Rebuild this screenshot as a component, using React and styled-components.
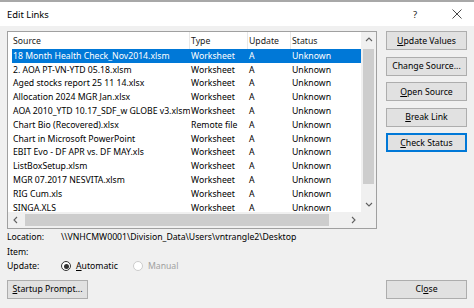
import React from 'react';
import styled, { createGlobalStyle } from 'styled-components';

const GlobalStyle = createGlobalStyle`
  html, body {
    margin: 0;
    padding: 0;
    background: #f0f0f0;
  }
  body {
    font-family: "Noto Sans", "Open Sans", sans-serif;
    font-size: 8.7px;
    color: #000;
  }
`;

const links = [
  ['18 Month Health Check_Nov2014.xlsm', 'Worksheet'],
  ['2. AOA PT-VN-YTD 05.18.xlsm', 'Worksheet'],
  ['Aged stocks report 25 11 14.xlsx', 'Worksheet'],
  ['Allocation 2024 MGR Jan.xlsx', 'Worksheet'],
  ['AOA 2010_YTD 10.17_SDF_w GLOBE v3.xlsm', 'Worksheet'],
  ['Chart Bio (Recovered).xlsx', 'Remote file'],
  ['Chart in Microsoft PowerPoint', 'Worksheet'],
  ['EBIT Evo - DF APR vs. DF MAY.xls', 'Worksheet'],
  ['ListBoxSetup.xlsm', 'Worksheet'],
  ['MGR 07.2017 NESVITA.xlsm', 'Worksheet'],
  ['RIG Cum.xls', 'Worksheet'],
  ['SINGA.XLS', 'Worksheet'],
];

const Chevron = ({ dir }) => {
  const paths = {
    up: 'M1 5 L4 2 L7 5',
    down: 'M1 2 L4 5 L7 2',
    left: 'M5 1 L2 4 L5 7',
    right: 'M2 1 L5 4 L2 7',
  };
  return (
    <svg width="8" height="8" viewBox="0 0 8 8">
      <path d={paths[dir]} fill="none" stroke="#606060" strokeWidth="1.1" />
    </svg>
  );
};

const CloseGlyph = () => (
  <svg width="10" height="10" viewBox="0 0 10 10">
    <path d="M0.5 0.5 L9.5 9.5 M9.5 0.5 L0.5 9.5" stroke="#333" strokeWidth="0.9" />
  </svg>
);

const App = () => {
  return (
    <>
      <GlobalStyle />
      <Window>
        <TitleBar>
          <Title>Edit Links</Title>
          <TitleButtons>
            <TitleGlyph>?</TitleGlyph>
            <CloseGlyph />
          </TitleButtons>
        </TitleBar>

        <Body>
          <TopArea>
            <ListBox>
              <ListContent>
                <HeaderRow>
                  <HeaderCell>Source</HeaderCell>
                  <HeaderCell>Type</HeaderCell>
                  <HeaderCell>Update</HeaderCell>
                  <HeaderCell $last>Status</HeaderCell>
                </HeaderRow>
                {links.map(([source, type], i) => (
                  <Row key={source} $selected={i === 0}>
                    <Cell>{source}</Cell>
                    <Cell>{type}</Cell>
                    <Cell>A</Cell>
                    <Cell>Unknown</Cell>
                  </Row>
                ))}
              </ListContent>

              <VScroll>
                <ArrowBox><Chevron dir="up" /></ArrowBox>
                <VTrack>
                  <VThumb />
                </VTrack>
                <ArrowBox><Chevron dir="down" /></ArrowBox>
              </VScroll>

              <HScroll>
                <ArrowBox $h><Chevron dir="left" /></ArrowBox>
                <HTrack>
                  <HThumb />
                </HTrack>
                <ArrowBox $h><Chevron dir="right" /></ArrowBox>
              </HScroll>
              <Corner />
            </ListBox>

            <ButtonColumn>
              <Button><u>U</u>pdate Values</Button>
              <Button>Chan<u>g</u>e Source...</Button>
              <Button><u>O</u>pen Source</Button>
              <Button><u>B</u>reak Link</Button>
              <Button $focused><u>C</u>heck Status</Button>
            </ButtonColumn>
          </TopArea>

          <InfoBlock>
            <InfoRow>
              <Label>Location:</Label>
              <Value>\\VNHCMW0001\Division_Data\Users\vntrangle2\Desktop</Value>
            </InfoRow>
            <InfoRow>
              <Label>Item:</Label>
            </InfoRow>
            <InfoRow>
              <Label>Update:</Label>
              <RadioGroup>
                <Radio>
                  <RadioCircle $checked />
                  <span><u>A</u>utomatic</span>
                </Radio>
                <Radio $disabled>
                  <RadioCircle $disabled />
                  <span>Manual</span>
                </Radio>
              </RadioGroup>
            </InfoRow>
          </InfoBlock>

          <Footer>
            <Button><u>S</u>tartup Prompt...</Button>
            <Button>Cl<u>o</u>se</Button>
          </Footer>
        </Body>
      </Window>
    </>
  );
};

export default App;


const Window = styled.div`
width: 474px;
height: 308px;
border-top: 2px solid #a8a8a8;
box-sizing: border-box;
background: #f0f0f0;
display: flex;
flex-direction: column;
overflow: hidden;
`;

const TitleBar = styled.div`
height: 24px;
background: #fff;
display: flex;
align-items: center;
justify-content: space-between;
padding: 0 7px;
`;

const Title = styled.div`
font-size: 9.4px;
`;

const TitleButtons = styled.div`
display: flex;
align-items: center;
gap: 35px;
padding-right: 5px;
`;

const TitleGlyph = styled.span`
font-size: 9.5px;
color: #222;
`;

const Body = styled.div`
padding: 5px 7px 0 7px;
display: flex;
flex-direction: column;
`;

const TopArea = styled.div`
display: flex;
gap: 9px;
align-items: flex-start;
`;

const ListBox = styled.div`
width: 370px;
height: 198px;
box-sizing: border-box;
border: 1px solid #a0a0a0;
background: #fff;
display: grid;
grid-template-columns: 1fr 15px;
grid-template-rows: 1fr 16px;
`;

const ListContent = styled.div`
overflow: hidden;
padding-left: 4px;
`;

const columns = '178px 58px 43px 1fr';

const HeaderRow = styled.div`
display: grid;
grid-template-columns: ${columns};
height: 17px;
align-items: center;
`;

const HeaderCell = styled.div`
padding-left: 1px;
height: 100%;
display: flex;
align-items: center;
border-right: ${p => (p.$last ? 'none' : '1px solid #e8e8e8')};
color: #1a1a1a;
`;

const Row = styled.div`
display: grid;
grid-template-columns: ${columns};
height: 13.8px;
align-items: center;
background: ${p => (p.$selected ? '#0078d7' : 'transparent')};
color: ${p => (p.$selected ? '#fff' : '#000')};
`;

const Cell = styled.div`
padding-left: 1px;
white-space: nowrap;
overflow: hidden;
`;

const VScroll = styled.div`
background: #f0f0f0;
display: flex;
flex-direction: column;
`;

const ArrowBox = styled.div`
width: 15px;
height: ${p => (p.$h ? '16px' : '15px')};
display: flex;
align-items: center;
justify-content: center;
flex-shrink: 0;
`;

const VTrack = styled.div`
flex: 1;
padding: 2px 2px;
display: flex;
flex-direction: column;
`;

const VThumb = styled.div`
height: 135px;
background: #cdcdcd;
`;

const HScroll = styled.div`
background: #f0f0f0;
display: flex;
align-items: stretch;
`;

const HTrack = styled.div`
flex: 1;
padding: 2px 2px;
display: flex;
`;

const HThumb = styled.div`
width: 304px;
background: #cdcdcd;
`;

const Corner = styled.div`
background: #f0f0f0;
`;

const ButtonColumn = styled.div`
display: flex;
flex-direction: column;
gap: 6.5px;
`;

const Button = styled.button`
width: 81px;
height: 19px;
box-sizing: border-box;
padding: 0;
font-family: inherit;
font-size: 8.7px;
color: #000;
background: #e1e1e1;
border: 1px solid ${p => (p.$focused ? '#0078d7' : '#adadad')};
box-shadow: ${p => (p.$focused ? 'inset 0 0 0 1px #0078d7' : 'none')};
u {
  text-underline-offset: 1px;
}
`;

const InfoBlock = styled.div`
display: flex;
flex-direction: column;
padding-top: 1px;
`;

const InfoRow = styled.div`
display: flex;
align-items: center;
height: 14.5px;
`;

const Label = styled.div`
width: 54px;
`;

const Value = styled.div`
white-space: nowrap;
`;

const RadioGroup = styled.div`
display: flex;
gap: 15px;
align-items: center;
`;

const Radio = styled.label`
display: flex;
align-items: center;
gap: 5px;
color: ${p => (p.$disabled ? '#a0a0a0' : '#000')};
`;

const RadioCircle = styled.span`
width: 10px;
height: 10px;
border-radius: 50%;
box-sizing: border-box;
border: 1px solid ${p => (p.$disabled ? '#cccccc' : '#333')};
background: #fff;
display: flex;
align-items: center;
justify-content: center;
&::after {
  content: '';
  width: 5px;
  height: 5px;
  border-radius: 50%;
  background: ${p => (p.$checked ? '#333' : 'transparent')};
}
`;

const Footer = styled.div`
display: flex;
justify-content: space-between;
padding-top: 6px;
`;
